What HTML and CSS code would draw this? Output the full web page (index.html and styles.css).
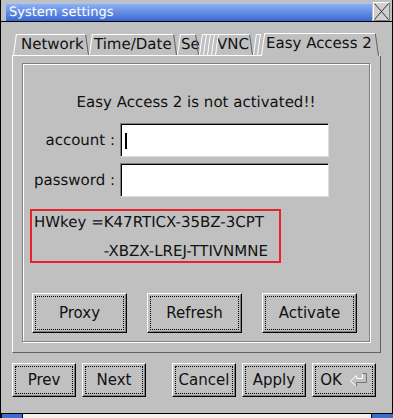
FILE: index.html
```html
<!DOCTYPE html>
<html lang="en">
<head>
    <meta charset="UTF-8">
    <title>System settings</title>
    <link rel="stylesheet" href="styles.css">
</head>
<body>
    <div class="window">
        <!-- Title bar -->
        <div class="titlebar">
            <div class="title">System settings</div>
            <div class="close">
                <svg width="15" height="17" viewBox="0 0 15 17">
                    <line x1="0.5" y1="0.5" x2="14.5" y2="16.5" stroke="#333" stroke-width="1"/>
                    <line x1="14.5" y1="0.5" x2="0.5" y2="16.5" stroke="#333" stroke-width="1"/>
                </svg>
            </div>
        </div>

        <div class="body">
            <!-- Tabs -->
            <div class="tabs">
                <div class="tab tab-network">Network</div>
                <div class="tab tab-time">Time/Date</div>
                <div class="tab tab-se"><span>Se</span></div>
                <div class="stack"><i></i><i></i><i></i><i></i></div>
                <div class="tab tab-vnc"><span>VNC</span></div>
                <div class="stack"><i></i><i></i></div>
                <div class="tab tab-active">Easy Access 2</div>
            </div>

            <!-- Tab page -->
            <div class="pane">
                <div class="group">
                    <p class="notice">Easy Access 2 is not activated!!</p>
                    <div class="form">
                        <label>account :</label>
                        <div class="field"><span class="caret"></span></div>
                        <label>password :</label>
                        <div class="field"></div>
                    </div>
                    <div class="hwkey">
                        <span>HWkey =</span>
                        <div class="key">
                            <div>K47RTICX-35BZ-3CPT</div>
                            <div>-XBZX-LREJ-TTIVNMNE</div>
                        </div>
                    </div>
                    <div class="actions">
                        <button class="btn btn-big"><span>Proxy</span></button>
                        <button class="btn btn-big"><span>Refresh</span></button>
                        <button class="btn btn-big"><span>Activate</span></button>
                    </div>
                </div>
            </div>

            <!-- Dialog buttons -->
            <div class="footer">
                <button class="btn"><span>Prev</span></button>
                <button class="btn"><span>Next</span></button>
                <button class="btn btn-cancel"><span>Cancel</span></button>
                <button class="btn"><span>Apply</span></button>
                <button class="btn"><span class="ok">OK
                    <svg width="18" height="14" viewBox="0 0 18 14">
                        <polyline points="6.5,13.5 0.5,8 6.5,2.5 6.5,5.5 12.5,5.5 12.5,0.5" fill="none" stroke="#fff" stroke-width="1"/>
                        <polyline points="12.5,0.5 16.5,0.5 16.5,9.5 6.5,9.5 6.5,13.5" fill="none" stroke="#777" stroke-width="1"/>
                    </svg>
                </span></button>
            </div>
        </div>
    </div>
    <div class="taskbar">
        <span class="tb-blue"></span>
        <span class="tb-mid"></span>
        <span class="tb-blue tb-right"></span>
    </div>
</body>
</html>
```

FILE: styles.css
```css
* {
    box-sizing: border-box;
}
body {
    margin: 0;
    width: 393px;
    height: 418px;
    overflow: hidden;
    background: #c0c0c0;
    font-family: "DejaVu Sans", sans-serif;
    font-size: 15px;
    color: #111;
    text-rendering: geometricPrecision;
}
.window {
    height: 414px;
    border: 1px solid #000;
    border-top: 0;
    background: #c0c0c0;
    display: flex;
    flex-direction: column;
}

/* title bar */
.titlebar {
    height: 22px;
    display: flex;
    align-items: flex-end;
    padding: 2px 2px 0 4px;
    border-bottom: 1px solid #000;
}
.title {
    flex: 1;
    height: 18px;
    line-height: 17px;
    padding-left: 3px;
    font-size: 13px;
    color: #fff;
    background: linear-gradient(#8cb0f2, #3a68d2);
    border-top: 1px solid #a8c4f6;
    border-left: 1px solid #a8c4f6;
}
.close {
    width: 17px;
    height: 19px;
    margin-left: 1px;
    background: #d0d0d0;
    border: 1px solid;
    border-color: #fff #808080 #808080 #fff;
    display: flex;
    align-items: center;
    justify-content: center;
}
.close svg {
    display: block;
}

.body {
    padding: 11px 11px 0 11px;
}

/* tabs */
.tabs {
    display: flex;
    align-items: flex-end;
    height: 22px;
    margin-left: 1px;
}
.tab {
    position: relative;
    flex: none;
    height: 21px;
    line-height: 20px;
    white-space: nowrap;
}
.tab::before,
.tab::after {
    content: "";
    position: absolute;
    top: 0;
    bottom: 0;
    border-top: 1px solid #fff;
    transform-origin: bottom;
}
.tab::before {
    left: 0;
    right: 50%;
    border-left: 1px solid #fff;
    transform: skewX(-8deg);
}
.tab::after {
    left: 50%;
    right: 0;
    border-right: 1px solid #606060;
    transform: skewX(8deg);
}
.tab-network {
    width: 76px;
    padding-left: 8px;
}
.tab-time {
    width: 88px;
    padding-left: 5px;
}
.tab-se,
.tab-vnc {
    overflow: hidden;
}
.tab-se {
    width: 22px;
    padding-left: 4px;
}
.tab-vnc {
    width: 38px;
    padding-left: 2px;
}
.tab-active {
    z-index: 1;
    width: 118px;
    height: 23px;
    margin-bottom: -1px;
    line-height: 21px;
    padding-left: 5px;
    background: #c0c0c0;
}
.stack {
    display: flex;
    height: 21px;
}
.stack i {
    width: 4px;
    height: 21px;
    border-left: 1px solid #fff;
    border-top: 1px solid #fff;
    transform: skewX(-8deg);
    transform-origin: bottom;
}

/* tab page */
.pane {
    height: 298px;
    border: 1px solid;
    border-color: #fff #606060 #606060 #fff;
    padding: 7px 10px 9px 9px;
}
.group {
    height: 279px;
    border: 1px solid #808080;
    box-shadow: inset 1px 1px 0 #fff, 1px 1px 0 #fff;
    display: flex;
    flex-direction: column;
}
.notice {
    margin: 29px 0 0;
    line-height: 18px;
    text-align: center;
}
.form {
    margin-top: 12px;
    padding-left: 11px;
    display: grid;
    grid-template-columns: auto 209px;
    justify-content: start;
    column-gap: 5px;
    row-gap: 6px;
}
.form label {
    align-self: center;
    text-align: right;
    line-height: 18px;
}
.field {
    height: 34px;
    background: #fff;
    border: 1px solid;
    border-color: #808080 #dcdcdc #dcdcdc #808080;
    box-shadow: inset 1px 1px 0 #000;
}
.caret {
    display: block;
    width: 2px;
    height: 16px;
    margin: 9px 0 0 4px;
    background: #000;
}
.hwkey {
    margin: 12px 0 0 7px;
    width: 251px;
    height: 54px;
    border: 2px solid #e8222b;
    padding: 2px 0 0 2px;
    display: flex;
    line-height: 18px;
}
.key {
    display: flex;
    flex-direction: column;
    gap: 11px;
}

/* buttons */
.btn {
    width: 64px;
    height: 34px;
    padding: 2px;
    margin: 0;
    background: #c0c0c0;
    border: 1px solid;
    border-color: #fff #000 #000 #fff;
    box-shadow: inset -1px -1px 0 #808080;
    font-family: "DejaVu Sans", sans-serif;
    font-size: 15px;
    color: #111;
}
.btn span {
    display: flex;
    align-items: center;
    justify-content: center;
    height: 100%;
    border: 1px dotted #000;
}
.btn-big {
    width: 95px;
    height: 40px;
}
.actions {
    margin-top: 30px;
    padding-left: 9px;
    display: flex;
    gap: 20px;
}
.footer {
    margin-top: 10px;
    display: flex;
    gap: 6px;
}
.btn-cancel {
    margin-left: 20px;
}
.btn .ok {
    gap: 8px;
}
.ok svg {
    display: block;
}

/* bottom strip */
.taskbar {
    height: 4px;
    display: flex;
}
.tb-blue {
    width: 23px;
    background: #3a6fd0;
    border-left: 2px solid #000;
    border-right: 1px solid #000;
}
.tb-right {
    width: 22px;
    border-right: 0;
    border-left: 1px solid #000;
}
.tb-mid {
    flex: 1;
    background: #f0f0f0;
}
```
